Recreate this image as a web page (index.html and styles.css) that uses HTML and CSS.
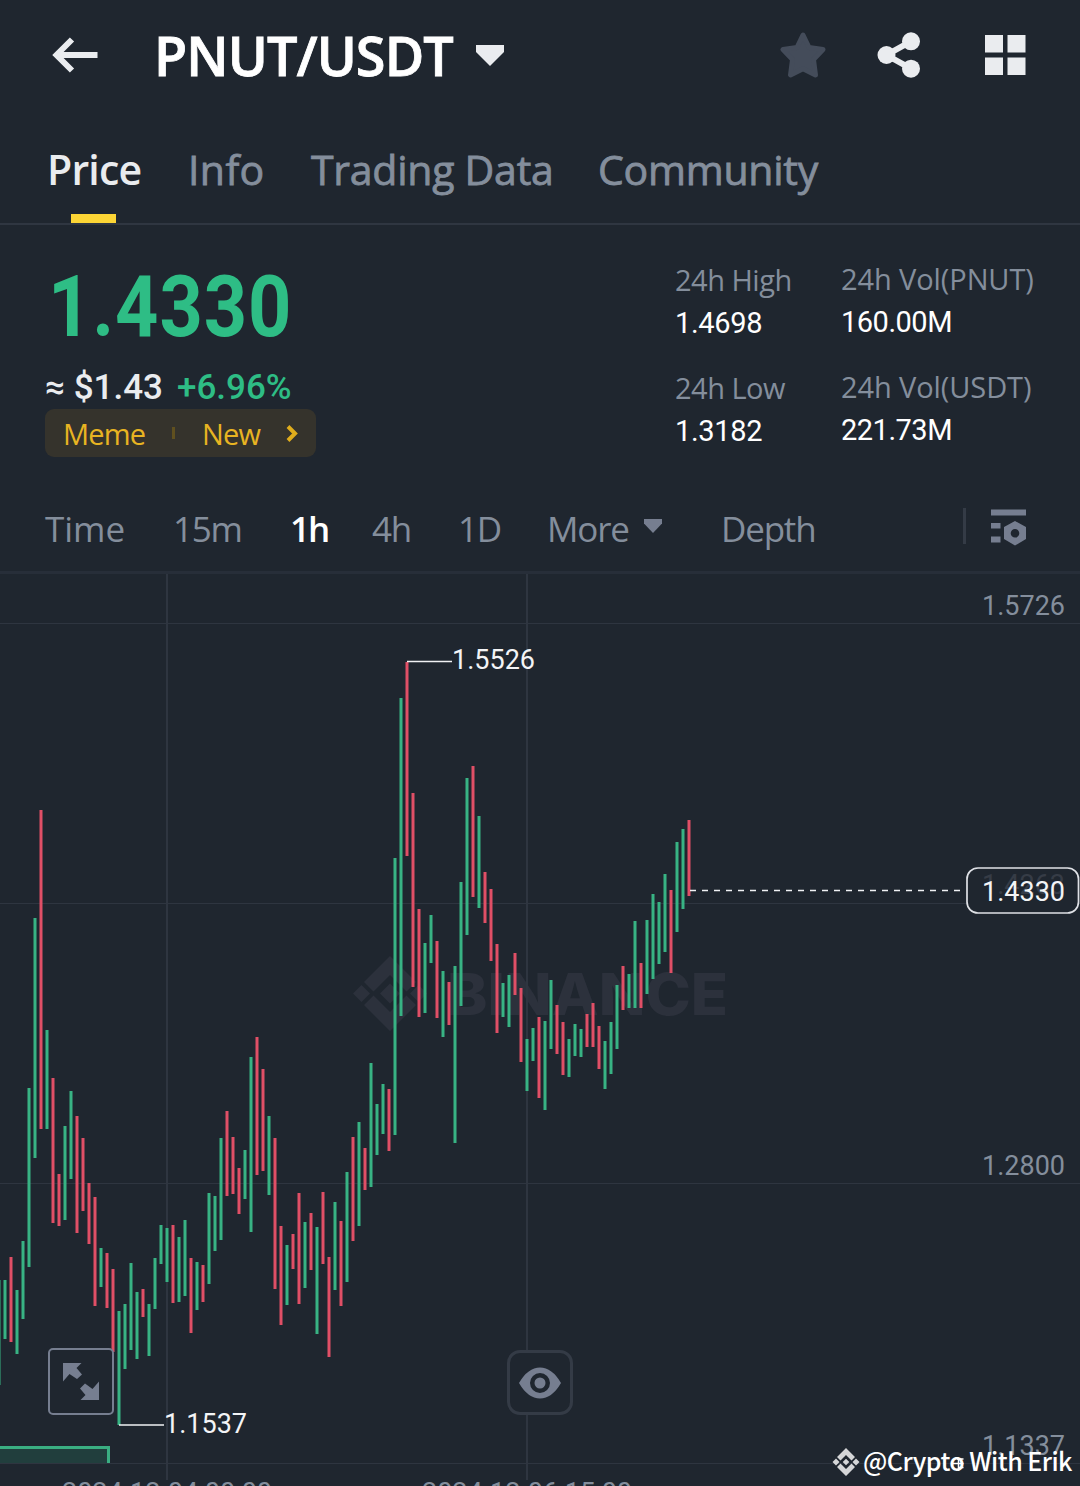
FILE: index.html
```html
<!DOCTYPE html>
<html lang="en">
<head>
<meta charset="utf-8">
<title>PNUT/USDT</title>
<link rel="stylesheet" href="styles.css">
</head>
<body>
<header class="topbar">
  <svg class="back" width="46" height="36" viewBox="0 0 46 36"><path d="M45.500 18H4M20 2.500L4.500 18L20 33.500" fill="none" stroke="#eaecef" stroke-width="6"/></svg>
  <h1 class="pair">PNUT/USDT</h1>
  <svg class="caret" width="28" height="21" viewBox="0 0 28 21"><path d="M0 0H28V7L14 21L0 7Z" fill="#eaecef"/></svg>
  <div class="actions">
    <svg width="46" height="46" viewBox="0 0 46 46"><path d="M23 3L29 15.500L43 17.500L33.500 27.500L35.500 43L23 36.800L10.500 43L12.500 27.500L3 17.500L17 15.500Z" fill="#444c5a" stroke="#444c5a" stroke-width="5" stroke-linejoin="round"/></svg>
    <svg width="44" height="46" viewBox="0 0 44 46"><path d="M34 9.300L9.500 23L34 36.700" fill="none" stroke="#eaecef" stroke-width="6"/><g fill="#eaecef"><circle cx="9.500" cy="23" r="9"/><circle cx="34" cy="9.300" r="9"/><circle cx="34" cy="36.700" r="9"/></g></svg>
    <svg width="41" height="40" viewBox="0 0 41 40"><path d="M0 0H18V17.500H0ZM22.500 0H40.500V17.500H22.500ZM0 22.500H18V40H0ZM22.500 22.500H40.500V40H22.500Z" fill="#eaecef"/></svg>
  </div>
</header>
<nav class="tabs">
  <span class="tab active">Price</span><span class="tab t-info">Info</span><span class="tab">Trading Data</span><span class="tab">Community</span>
</nav>
<section class="summary">
  <div class="quote">
    <div class="last">1.4330</div>
    <div class="fiat"><span class="usd">≈ $1.43</span><span class="change">+6.96%</span></div>
    <div class="tags"><span class="meme">Meme</span><i class="sep"></i><span class="new">New</span><svg class="chev" width="12" height="17" viewBox="0 0 12 17"><path d="M2 1.500L9 8.500L2 15.500" fill="none" stroke="#e0ad1c" stroke-width="4"/></svg></div>
  </div>
  <dl class="stats">
    <div class="stat"><dt>24h High</dt><dd>1.4698</dd></div>
    <div class="stat vol"><dt>24h Vol(PNUT)</dt><dd>160.00M</dd></div>
    <div class="stat"><dt>24h Low</dt><dd>1.3182</dd></div>
    <div class="stat vol"><dt>24h Vol(USDT)</dt><dd>221.73M</dd></div>
  </dl>
</section>
<nav class="intervals">
  <span class="wide">Time</span><span>15m</span><span class="on">1h</span><span>4h</span><span>1D</span>
  <span class="more">More<svg width="18" height="14" viewBox="0 0 18 14"><path d="M0 0H18V4.500L9 14L0 4.500Z" fill="#767e90"/></svg></span>
  <span>Depth</span><i class="rule"></i>
  <svg class="settings" width="36" height="37" viewBox="0 0 36 37"><g fill="#767e90"><path d="M0 0.500H35V6.500H0ZM0 14H9.500V19.500H0ZM0 27.500H9.500V33.500H0Z"/><path fill-rule="evenodd" d="M24 12L35 18V30L24 36.500L13 30V18ZM24 20A4.300 4.300 0 1 0 24 28.600A4.300 4.300 0 1 0 24 20Z"/></g></svg>
</nav>
<main class="chart">
  <svg class="plot" width="1080" height="912" viewBox="0 574 1080 912">
    <g class="mark">
      <path d="M390 956L416 982L406.500 991.500L390 975L373.500 991.500L364 982ZM390 1031L416 1005L406.500 995.500L390 1012L373.500 995.500L364 1005ZM353 993.500L361.500 985L370 993.500L361.500 1002ZM380 993.500L390 983.500L400 993.500L390 1003.500ZM410 993.500L418.500 985L427 993.500L418.500 1002Z"/>
      <text x="447" y="1014.500" textLength="281" lengthAdjust="spacingAndGlyphs">BINANCE</text>
    </g>
    <path class="grid" d="M0 623.500H1080M0 903.500H1080M0 1183.500H1080M0 1463.500H1080"/>
    <path class="grid v" d="M167 574V1480M527 574V1480"/>
    <rect x="0" y="1447" width="108" height="16" fill="#213e3d"/>
    <path d="M0 1447.500H108.500V1463" fill="none" stroke="#3aae82" stroke-width="3"/>
    <path id="up" class="candle up"/><path id="down" class="candle down"/>
    <path class="lead" d="M407 661.500H452M119 1425H164"/>
    <path class="lead dash" d="M690 890.500H962"/>
    <g class="axis">
      <text x="982" y="615" textLength="83">1.5726</text>
      <text x="982" y="1175" textLength="83">1.2800</text>
      <text x="982" y="1455" textLength="83">1.1337</text>
      <text x="62" y="1502" textLength="210">2024-12-04 00:00</text>
      <text x="422" y="1502" textLength="210">2024-12-06 15:00</text>
      <text class="hi" x="452" y="669" textLength="83">1.5526</text>
      <text class="hi" x="164" y="1433" textLength="83">1.1537</text>
      <rect class="pricebox" x="967" y="868" width="111.500" height="45" rx="11"/>
      <text class="ghost" x="982" y="894" textLength="83">1.4263</text>
      <text class="hi" x="982" y="901" textLength="83">1.4330</text>
    </g>
    <g class="author">
      <path d="M846 1448L855 1457L851.500 1460.500L846 1455L840.500 1460.500L837 1457ZM846 1476L855 1467L851.500 1463.500L846 1469L840.500 1463.500L837 1467ZM832.500 1462L836 1458.500L839.500 1462L836 1465.500ZM842.700 1462L846 1458.700L849.300 1462L846 1465.300ZM852.500 1462L856 1458.500L859.500 1462L856 1465.500Z" fill="#d5d6d8"/>
      <text x="863" y="1471" textLength="209.500">@Crypto With Erik</text>
      <path d="M952 1463.500H963.500M957 1459H963.500M959 1467.500H963.500M958.500 1458V1471" stroke="#fff" stroke-width="1.500"/>
    </g>
  </svg>
  <span class="tool expand"><svg width="36" height="37" viewBox="0 0 36 37"><path d="M0 0H18.500L13.500 5L19 11.500L14 16L6.500 11L0 18.500ZM36 37H17.500L22.500 32L17 25.500L22 20.500L29.500 26L36 18.500Z" fill="#767e90"/></svg></span>
  <span class="tool eye"><svg width="44" height="32" viewBox="0 0 44 32"><path fill-rule="evenodd" d="M1 16Q10 0.500 22 0.500T43 16Q34 31.500 22 31.500T1 16ZM22 6A10 10 0 1 0 22 26A10 10 0 1 0 22 6ZM22 10.500A5.500 5.500 0 1 1 22 21.500A5.500 5.500 0 1 1 22 10.500Z" fill="#767e90"/></svg></span>
</main>
<script src="chart.js"></script>
</body>
</html>
```
FILE: styles.css
```css
* { box-sizing: border-box; margin: 0; padding: 0; }
body { width: 1080px; height: 1486px; overflow: hidden; background: #1f262f; color: #eaecef; font-family: "Open Sans", "Noto Sans", sans-serif; display: flex; flex-direction: column; }
svg { display: block; flex: none; }
span, h1, dt, dd { white-space: nowrap; }
.topbar { height: 112px; padding: 0 54px 2px 52px; display: flex; align-items: center; }
.pair { margin-left: 56px; width: 300px; font-size: 54px; line-height: 70px; font-weight: 600; color: #fff; letter-spacing: -.9px; -webkit-text-stroke: .8px #fff; }
.caret { margin-left: 22px; }
.actions { margin-left: auto; display: flex; align-items: center; gap: 51px; }
.actions svg:last-child { margin-left: 13px; }
.tabs { height: 113px; border-bottom: 2px solid #2f3641; padding-left: 47px; display: grid; grid-template-columns: 141px 123px 287px 300px; font-size: 41px; line-height: 60px; padding-top: 27px; color: #848e9c; letter-spacing: -.25px; -webkit-text-stroke: .8px #848e9c; }
.tab.active { position: relative; color: #eaecef; font-weight: 600; letter-spacing: -.8px; -webkit-text-stroke: 0; }
.tab.t-info { letter-spacing: .4px; }
.tab.active::after { content: ""; position: absolute; left: 24px; top: 75px; width: 45px; height: 9px; background: #fcd535; }
.summary { height: 267px; padding: 39px 0 0 45px; display: flex; }
.quote { width: 630px; }
.last { font: 700 85px/84px Roboto, sans-serif; color: #2ebd85; letter-spacing: 1px; margin: 1px 0 -1px 3px; transform: scaleX(.89); transform-origin: left; }
.fiat { height: 61px; padding-top: 20px; display: flex; font: 500 35px/40px Roboto, sans-serif; }
.usd { width: 132px; }
.change { color: #2ebd85; }
.tags { width: 271px; height: 48px; border-radius: 9px; background: #35332c; color: #e8b422; display: flex; align-items: center; padding-left: 18px; font-size: 29px; letter-spacing: -.8px; }
.meme { width: 109px; }
.sep { width: 3px; height: 12px; background: #60501f; margin-right: 27px; }
.new { width: 84px; }
.stats { display: grid; grid-template-columns: 166px 200px; grid-auto-rows: 108px; }
.stat dt { font-size: 29px; line-height: 42px; color: #848e9c; margin-top: -5px; letter-spacing: -.5px; }
.stat dd { font: 400 29px/42px Roboto, sans-serif; color: #fff; letter-spacing: -.3px; margin-top: 1px; }
.stat.vol { margin-top: -1px; }
.stat.vol dt { letter-spacing: -.1px; }
.stat.vol dd { letter-spacing: -.5px; }
.intervals { height: 82px; border-bottom: 3px solid #272e39; padding-left: 45px; padding-bottom: 6px; display: grid; grid-template-columns: 128px 117px 82px 86px 89px 174px 242px 28px 36px; align-items: center; color: #848e9c; font-size: 35px; line-height: 46px; letter-spacing: -1.200px; }
.wide { letter-spacing: 0; }
.on { color: #fff; font-weight: 600; letter-spacing: -2px; }
.more { display: flex; align-items: center; gap: 15px; }
.more svg { margin-top: -6px; }
.rule { width: 3px; height: 36px; background: #343b46; margin-top: -5px; }
.settings { margin-top: -3px; }
.chart { position: relative; height: 912px; }
.mark { fill: #2c313c; font: 800 58px Inter, sans-serif; }
.grid { stroke: #2e3540; stroke-width: 1; fill: none; }
.grid.v { stroke-width: 2; }
.candle { fill: none; stroke-width: 3; }
.up { stroke: #38b384; }
.down { stroke: #e04f66; }
.lead { stroke: #f0f1f4; stroke-width: 1.500; fill: none; }
.dash { stroke-dasharray: 6 6; }
.axis { font: 400 27px Roboto, sans-serif; fill: #848e9c; }
.hi { fill: #f3f4f6; }
.pricebox { fill: #1f262f; stroke: #dfe1e6; stroke-width: 1.700; }
.ghost { fill: #363c46; }
.author { font: 500 25px "Noto Sans CJK SC", sans-serif; fill: #fff; }
.tool { position: absolute; display: flex; align-items: center; justify-content: center; background: #1f262f; }
.expand { left: 48px; top: 774px; width: 66px; height: 67px; border: 2px solid #767e90; border-radius: 5px; }
.eye { left: 507px; top: 776px; width: 66px; height: 65px; border: 3px solid #343b46; border-radius: 13px; }
```
FILE: chart.js
```js
// Candles are 6px apart, starting at x = -1: [direction, high y, low y]
const candles = `g1280-1385 g1280-1339 r1257-1342 g1290-1354 g1241-1319 g1088-1267 g918-1158 r810-1129 g1030-1129 r1078-1223
r1174-1226 g1126-1220 g1091-1179 r1116-1233 r1138-1211 r1183-1244 r1197-1306 g1248-1287 r1253-1308 r1269-1352
g1311-1425 g1304-1369 g1263-1350 g1292-1359 r1289-1317 g1304-1356 g1258-1309 g1225-1264 g1228-1282 r1225-1303
g1237-1302 g1220-1296 r1258-1333 g1262-1310 r1265-1302 g1193-1284 g1196-1251 g1138-1240 r1111-1196 r1137-1194
r1168-1214 g1150-1199 g1057-1232 r1037-1175 r1069-1171 g1116-1195 r1138-1289 r1226-1325 g1245-1305 r1234-1269
r1193-1304 g1222-1288 r1213-1270 g1227-1334 r1192-1264 r1257-1357 g1202-1290 r1221-1306 g1172-1282 r1137-1241
g1122-1226 r1148-1190 g1063-1187 g1104-1155 g1084-1134 r1089-1151 g858-1135 g698-1016 r662-856 r793-987
r909-1017 g943-1013 g915-963 r941-1018 g971-1037 r982-1025 g966-1143 g882-1006 g778-935 r766-897
g816-908 r872-923 r889-961 r944-1033 g983-1017 g975-1027 r953-995 r988-1062 g1039-1091 g1028-1061
r1017-1098 g1021-1110 g980-1049 r1005-1054 r1022-1075 g1039-1077 g1024-1056 g1029-1057 r1014-1047 r1003-1047
r1026-1069 g1041-1089 g1022-1074 g985-1049 r966-1010 g974-1008 g921-1008 r963-1008 g920-994 g894-979
g902-964 g874-952 r890-973 g842-932 g829-909 r820-896`.split(/\s+/);
const paths = { g: '', r: '' };
candles.forEach((c, i) => {
  const [high, low] = c.slice(1).split('-');
  paths[c[0]] += `M${i * 6 - 1} ${high}V${low}`;
});
document.getElementById('up').setAttribute('d', paths.g);
document.getElementById('down').setAttribute('d', paths.r);
```
